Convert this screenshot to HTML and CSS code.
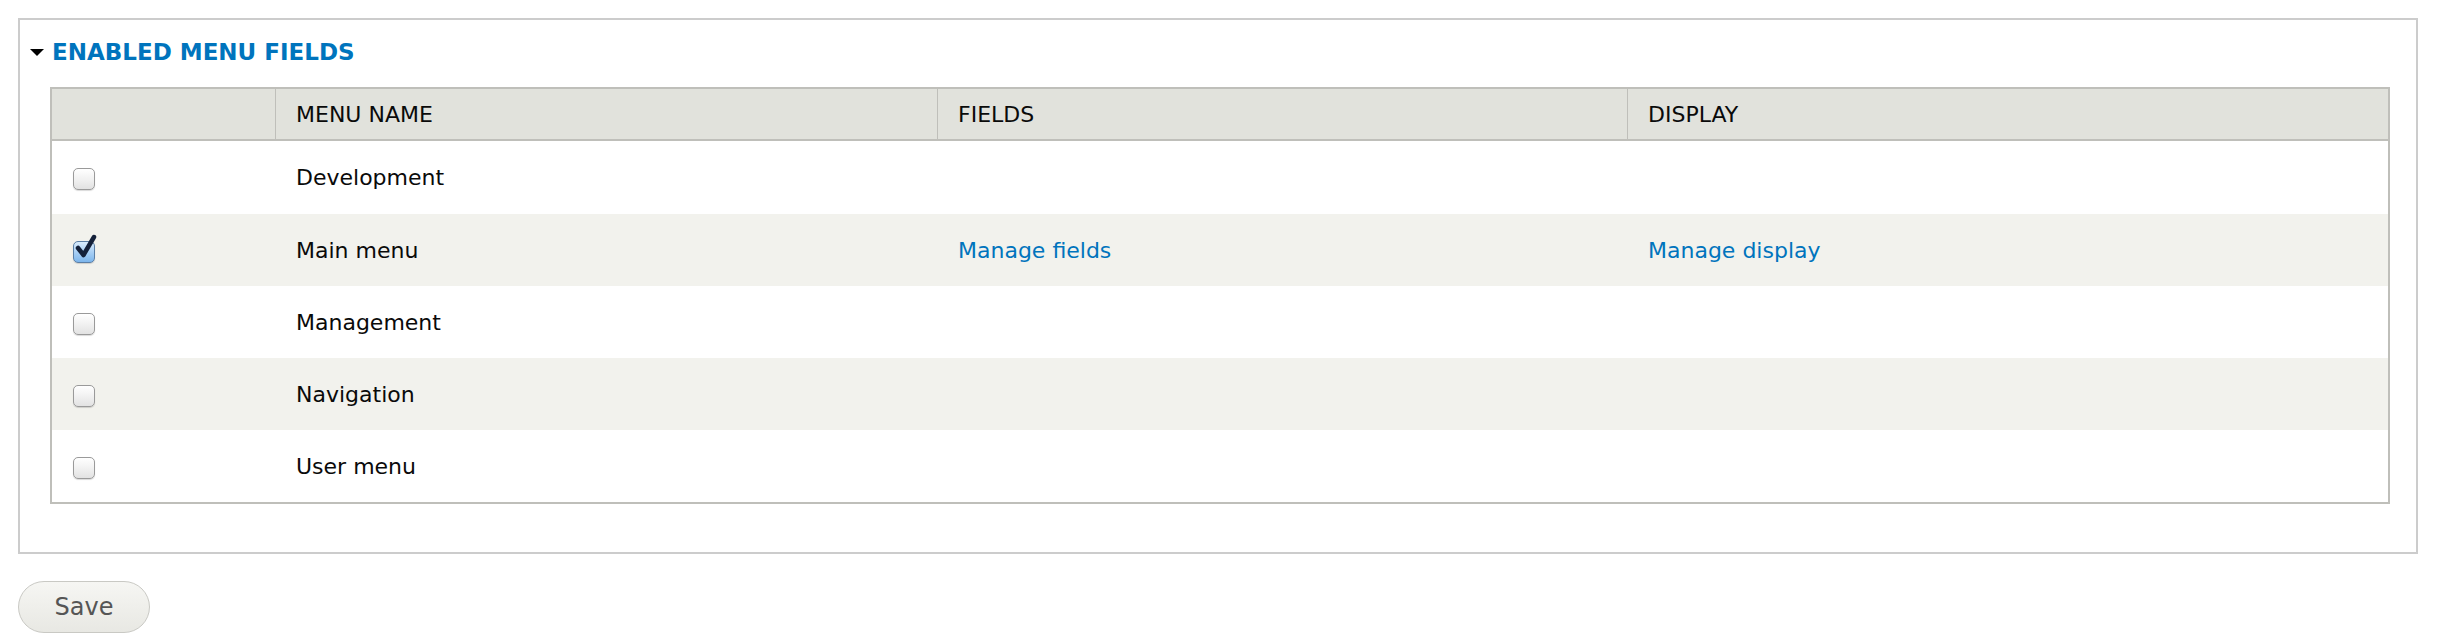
FILE: index.html
```html
<!DOCTYPE html>
<html lang="en">

<head>
    <meta charset="UTF-8">
    <title>Menu fields</title>
    <link rel="stylesheet" href="styles.css">
</head>

<body>

    <form class="page">
        <!-- Enabled menu fields -->
        <div class="fieldset">
            <div class="summary"><span class="arrow"></span>Enabled menu fields</div>

            <table class="menus">
                <colgroup>
                    <col class="col-select">
                    <col class="col-name">
                    <col class="col-fields">
                    <col>
                </colgroup>
                <thead>
                    <tr>
                        <th></th>
                        <th>Menu name</th>
                        <th>Fields</th>
                        <th>Display</th>
                    </tr>
                </thead>
                <tbody>
                    <tr>
                        <td><span class="check"><input type="checkbox"></span></td>
                        <td>Development</td>
                        <td></td>
                        <td></td>
                    </tr>
                    <tr class="even">
                        <td>
                            <span class="check">
                                <input type="checkbox" checked>
                                <svg class="tick" width="26" height="28" viewBox="0 0 26 28">
                                    <path d="M5 15 L10.5 22 L21 4" fill="none" stroke="#14213a" stroke-width="4.5" stroke-linecap="round" stroke-linejoin="round"/>
                                </svg>
                            </span>
                        </td>
                        <td>Main menu</td>
                        <td><a href="#">Manage fields</a></td>
                        <td><a href="#">Manage display</a></td>
                    </tr>
                    <tr>
                        <td><span class="check"><input type="checkbox"></span></td>
                        <td>Management</td>
                        <td></td>
                        <td></td>
                    </tr>
                    <tr class="even">
                        <td><span class="check"><input type="checkbox"></span></td>
                        <td>Navigation</td>
                        <td></td>
                        <td></td>
                    </tr>
                    <tr>
                        <td><span class="check"><input type="checkbox"></span></td>
                        <td>User menu</td>
                        <td></td>
                        <td></td>
                    </tr>
                </tbody>
            </table>
        </div>

        <button type="button" class="save">Save</button>
    </form>

</body>

</html>
```

FILE: styles.css
```css
body {
    margin: 0;
    font-family: "DejaVu Sans", Verdana, sans-serif;
    font-size: 22px;
    color: #0a0a0a;
    background: #fff;
}

.page {
    padding: 18px 40px 0 18px;
}

.fieldset {
    border: 2px solid #cccccc;
    padding: 19px 26px 48px 30px;
}

.summary {
    color: #0074bd;
    font-weight: bold;
    font-size: 23px;
    line-height: 27px;
    text-transform: uppercase;
    margin-bottom: 21px;
}

.arrow {
    display: inline-block;
    width: 0;
    height: 0;
    border-left: 7px solid transparent;
    border-right: 7px solid transparent;
    border-top: 7px solid #000;
    margin: 0 8px 0 -20px;
    vertical-align: 4px;
}

.menus {
    width: 100%;
    border: 2px solid #bfbfba;
    border-spacing: 0;
    table-layout: fixed;
}

.col-select {
    width: 223px;
}

.col-name {
    width: 662px;
}

.col-fields {
    width: 690px;
}

.menus th {
    background-color: #e1e2dc;
    height: 50px;
    padding: 0 20px;
    text-align: left;
    font-weight: normal;
    text-transform: uppercase;
    border-bottom: 2px solid #bfbfba;
    border-left: 1px solid #bfbfba;
}

.menus th:first-child {
    border-left: none;
}

.menus td {
    height: 72px;
    padding: 0 20px 0 21px;
}

.menus tbody tr:first-child td {
    height: 73px;
}

.menus tr.even td {
    background-color: #f2f2ed;
}

.menus a {
    color: #0074bd;
    text-decoration: none;
}

.check {
    position: relative;
    display: inline-block;
    width: 22px;
    height: 22px;
    top: 4px;
}

.check input {
    appearance: none;
    -webkit-appearance: none;
    display: block;
    width: 22px;
    height: 22px;
    margin: 0;
    border: 1px solid #9a9a9a;
    border-radius: 5px;
    background: linear-gradient(#ffffff, #f0f0f0 55%, #e2e2e2);
    box-shadow: 0 1px 1px rgba(0, 0, 0, 0.15);
}

.check input:checked {
    border-color: #5b7fa6;
    background: linear-gradient(#d9ecfd, #a9d0f5 50%, #7db6ec);
}

.tick {
    position: absolute;
    left: 0;
    top: -8px;
}

.save {
    margin-top: 27px;
    width: 132px;
    height: 52px;
    font-family: "DejaVu Sans", Verdana, sans-serif;
    font-size: 24px;
    color: #555;
    background: linear-gradient(#f6f6f3, #e8e8e3);
    border: 1px solid #c9c9c4;
    border-radius: 26px;
    cursor: pointer;
}
```
